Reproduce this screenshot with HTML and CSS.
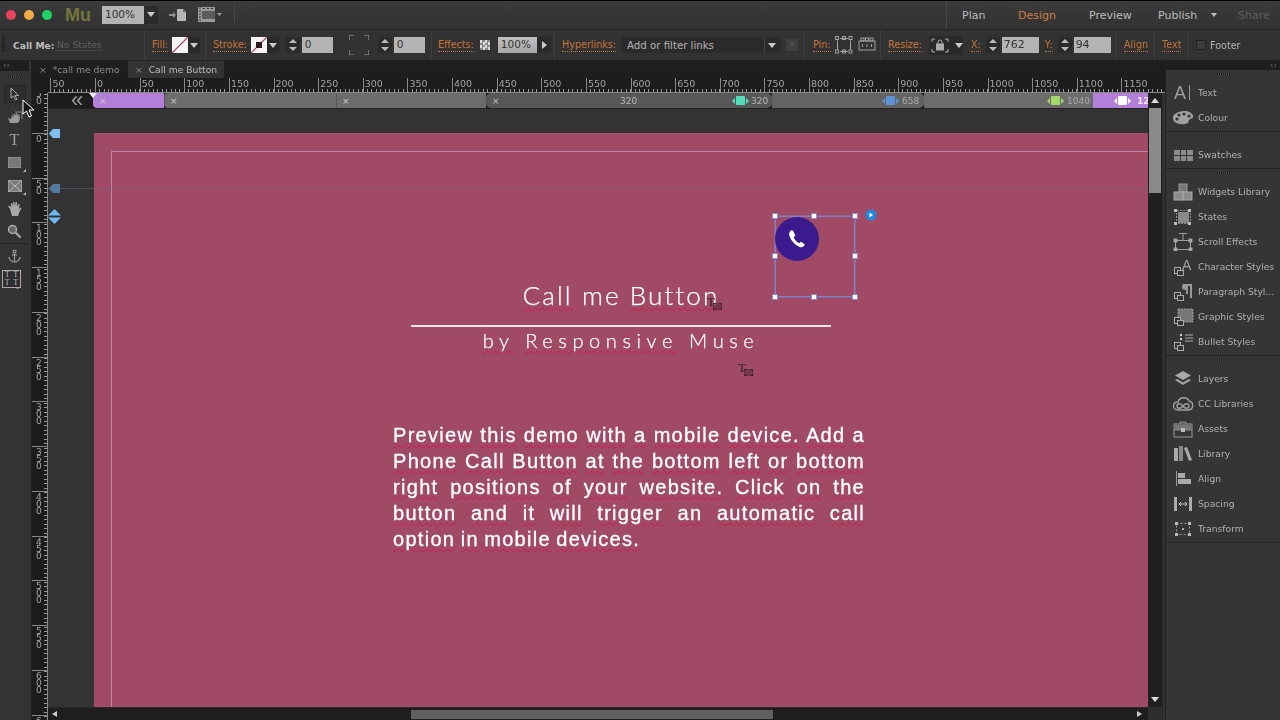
FILE: index.html
```html
<!DOCTYPE html>
<html lang="en">
<head>
    <meta charset="UTF-8">
    <title>Adobe Muse - Call me Button</title>
    <link rel="stylesheet" href="styles.css">
</head>
<body>
<div class="app">
    <!-- title bar -->
    <header class="titlebar">
        <div class="lights"><i class="red"></i><i class="yellow"></i><i class="green"></i></div>
        <div class="logo">Mu</div>
        <div class="zoom-box"><span class="field zoom-field">100%</span><span class="drop"></span></div>
        <svg class="place-icon" width="20" height="14" viewBox="0 0 20 14"><path d="M1 6h4V4l3 3-3 3V8H1z" fill="#8f8f8f"/><path d="M9 1h6l3 3v9H9z" fill="#b5b5b5"/><path d="M15 1v3h3" fill="#666"/></svg>
        <svg class="frame-icon" width="24" height="16" viewBox="0 0 24 16"><rect x="0" y="0" width="17" height="15" fill="#9a9a9a"/><rect x="4" y="4" width="13" height="8" fill="#5c5c5c"/><path d="M1 1h2M1 4h2M1 7h2M1 10h2M1 13h2M5 1.500h2M9 1.500h2M13 1.500h2" stroke="#333" stroke-width="1"/><path d="M19 6h5l-2.500 3z" fill="#999"/></svg>
        <div class="vsep top-sep"></div>
        <nav class="modes">
            <span class="m-plan">Plan</span>
            <span class="m-design">Design</span>
            <span class="m-preview">Preview</span>
            <span class="m-publish">Publish</span>
            <i class="m-arrow"></i>
            <span class="m-share">Share</span>
        </nav>
    </header>

    <!-- control strip -->
    <section class="controls">
        <div class="seg s-state"><span class="grip"></span><b class="lbl-name">Call Me:</b><span class="lbl-dim">No States</span></div>
        <div class="seg s-fill">
            <span class="lbl">Fill:</span>
            <span class="swatch"><svg width="16" height="16" viewBox="0 0 16 16"><path d="M0 16L16 0" stroke="#b0304a" stroke-width="1.200"/></svg></span><span class="mini-drop"></span>
        </div>
        <div class="seg s-stroke">
            <span class="lbl">Stroke:</span>
            <span class="swatch"><svg width="16" height="16" viewBox="0 0 16 16"><path d="M0 16L16 0" stroke="#b0304a" stroke-width="1.200"/><rect x="5" y="5" width="6" height="6" fill="#2a1a20"/></svg></span><span class="mini-drop"></span>
            <span class="spin sp-a"></span><span class="field num-s">0</span>
            <svg class="corners" width="20" height="20" viewBox="0 0 20 20"><path d="M0 5V0h5M15 0h5v5M20 15v5h-5M5 20H0v-5" fill="none" stroke="#a8a8a8" stroke-width="1"/></svg>
            <span class="spin sp-b"></span><span class="field num-s">0</span>
        </div>
        <div class="seg s-effects">
            <span class="lbl">Effects:</span>
            <span class="checker"></span>
            <span class="field opacity">100%</span><span class="play"></span>
        </div>
        <div class="seg s-links">
            <span class="lbl">Hyperlinks:</span>
            <span class="link-box"><span class="link-text">Add or filter links</span><span class="link-drop"></span></span>
            <span class="link-x">&#10005;</span>
        </div>
        <div class="seg s-pin">
            <span class="lbl">Pin:</span>
            <svg width="18" height="18" viewBox="0 0 18 18" fill="none" stroke="#a0a0a0"><path d="M2.500 4.500v9M15.500 4.500v9M5 2.500h8M5 15.500h8"/><rect x=".5" y=".5" width="3" height="3"/><rect x="7.500" y=".5" width="3" height="3"/><rect x="14" y=".5" width="3" height="3"/><rect x=".5" y="14" width="3" height="3"/><rect x="7.500" y="14" width="3" height="3"/><rect x="14" y="14" width="3" height="3"/></svg>
            <svg class="pin-b" width="18" height="18" viewBox="0 0 18 18" fill="none" stroke="#a0a0a0"><rect x="1" y="5" width="16" height="9"/><rect x="3" y="2" width="3" height="3"/><rect x="7.500" y="2" width="3" height="3"/><rect x="12" y="2" width="3" height="3"/><path d="M4.500 8v3M9 8v3M13.500 8v3"/></svg>
        </div>
        <div class="seg s-resize">
            <span class="lbl">Resize:</span>
            <span class="resize-box"><svg width="18" height="15" viewBox="0 0 18 15" fill="none" stroke="#aaa"><path d="M1 4V1h3M14 1h3v3M17 11v3h-3M4 14H1v-3"/><rect x="5.500" y="6" width="7" height="6" fill="#aaa"/><path d="M7 6V4a2 2 0 0 1 4 0v2"/></svg><i class="dn"></i></span>
            <span class="lbl lbl-x">X:</span><span class="spin"></span><span class="field num-l">762</span>
            <span class="lbl lbl-y">Y:</span><span class="spin"></span><span class="field num-l">94</span>
        </div>
        <div class="seg s-align"><span class="lbl">Align</span></div>
        <div class="seg s-text"><span class="lbl">Text</span></div>
        <div class="seg s-footer"><span class="check"></span><span>Footer</span></div>
    </section>

    <div class="workspace">
        <!-- tools -->
        <aside class="tools">
            <div class="panel-top"><span>&#8250;&#8250;</span></div>
            <div class="handle"></div>
            <div class="tool tool-active"><svg width="12" height="14" viewBox="0 0 12 14"><path d="M2 1v10l2.500-2 2 4 1.500-.8-2-3.700h3.500z" fill="none" stroke="#a8a8a8"/></svg></div>
            <div class="tool"><svg width="18" height="16" viewBox="0 0 18 16"><path d="M2 9l2 5h8l2-5-1-4-1 3V4l-1 3V3L9 7V4L7 8 6 6 5 10z" fill="#9a9a9a"/><path d="M9 3h7v7M6 6h7v7" fill="none" stroke="#888"/></svg></div>
            <div class="tool tool-t">T</div>
            <div class="tool corner"><span class="rect-tool"></span></div>
            <div class="tool corner"><svg width="14" height="12" viewBox="0 0 14 12"><rect x=".5" y=".5" width="13" height="11" fill="#7a7a7a" stroke="#999"/><path d="M.5.5l13 11M13.500.5l-13 11" stroke="#bbb"/></svg></div>
            <div class="tool"><svg width="16" height="16" viewBox="0 0 16 16"><path d="M3 8L1 5.500l1-1L4 6V2h1l1 3V1h1.200l.8 4 .5-4H10l.2 4.500L11.500 3h1.200l-.7 5 1.500-1.500 1 .7L12 12l-1 3H5z" fill="#a8a8a8"/></svg></div>
            <div class="tool"><svg width="15" height="15" viewBox="0 0 15 15"><circle cx="5.500" cy="5.500" r="4" fill="#666" stroke="#aaa" stroke-width="1.500"/><path d="M8.500 8.500l5 5" stroke="#aaa" stroke-width="2.200"/></svg></div>
            <div class="tool-sep"></div>
            <div class="tool"><svg width="13" height="14" viewBox="0 0 13 14" fill="none" stroke="#a0a0a0" stroke-width="1.200"><circle cx="6.500" cy="2.500" r="1.500"/><path d="M6.500 4v9M4 6h5M1 8c0 3 3 5 5.500 5S12 11 12 8"/></svg></div>
            <div class="tool tool-last"><span class="tt-back">T</span></div>
        </aside>

        <main class="center">
            <div class="tabs">
                <div class="tab"><span class="tab-x">&#215;</span>*call me demo</div>
                <div class="tab tab-on"><span class="tab-x">&#215;</span>Call me Button</div>
            </div>
            <div class="ruler-row">
                <div class="corner-box"></div>
                <div class="hruler">
                    <span>50</span><span>0</span><span>50</span><span>100</span><span>150</span><span>200</span><span>250</span><span>300</span><span>350</span><span>400</span><span>450</span><span>500</span><span>550</span><span>600</span><span>650</span><span>700</span><span>750</span><span>800</span><span>850</span><span>900</span><span>950</span><span>1000</span><span>1050</span><span>1100</span><span>1150</span>
                </div>
            </div>
            <div class="stage-row">
                <div class="vruler">
                    <span>5<br>0</span><span>0</span><span>5<br>0</span><span>1<br>0<br>0</span><span>1<br>5<br>0</span><span>2<br>0<br>0</span><span>2<br>5<br>0</span><span>3<br>0<br>0</span><span>3<br>5<br>0</span><span>4<br>0<br>0</span><span>4<br>5<br>0</span><span>5<br>0<br>0</span><span>5<br>5<br>0</span><span>6<br>0<br>0</span><span>6<br>5<br>0</span>
                </div>
                <div class="stage">
                    <div class="bp-bar">
                        <span class="bp-arrows">&#171;</span>
                        <div class="bp bp-p1"><span class="bp-x">&#215;</span></div>
                        <div class="bp bp-g1"><span class="bp-x">&#215;</span></div>
                        <div class="bp bp-g2"><span class="bp-x">&#215;</span></div>
                        <div class="bp bp-main"><span class="bp-x">&#215;</span><span class="bp-mid">320</span><i class="mark mk-teal"></i><span class="bp-num">320</span></div>
                        <div class="bp bp-g3"><i class="mark mk-blue"></i><span class="bp-num">658</span></div>
                        <div class="bp bp-g4"><i class="mark mk-green"></i><span class="bp-num">1040</span></div>
                        <div class="bp bp-p2"><i class="mark mk-white"></i><span class="bp-num">12</span></div>
                        <i class="bp-tri"></i>
                    </div>
                    <div class="canvas">
                        <div class="guide-line"></div>
                        <i class="guide-pin gp-top"></i>
                        <i class="guide-pin gp-mid"></i>
                        <svg class="gp-diamond" width="13" height="15" viewBox="0 0 13 15"><path d="M6.500 0L13 6.500H0zM0 8.500h13L6.500 15z" fill="#6fb7f2"/></svg>
                        <div class="page">
                            <div class="margins"></div>
                            <div class="hero">
                                <h1><span class="sp">Call</span> me <span class="sp">Button</span></h1>
                                <hr>
                                <h2><span class="sp">by</span> <span class="sp">Responsive</span> Muse</h2>
                            </div>
                            <p class="intro"><span class="sp">Preview</span> <span class="sp">this</span> <span class="sp">demo</span> <span class="sp">with</span> <span class="sp">a</span> <span class="sp">mobile</span> <span class="sp">device.</span> <span class="sp">Add</span> <span class="sp">a</span> <span class="sp">Phone</span> <span class="sp">Call</span> <span class="sp">Button</span> <span class="sp">at</span> <span class="sp">the</span> <span class="sp">bottom</span> <span class="sp">left</span> <span class="sp">or</span> <span class="sp">bottom</span> <span class="sp">right</span> <span class="sp">positions</span> <span class="sp">of</span> <span class="sp">your</span> <span class="sp">website.</span> <span class="sp">Click</span> <span class="sp">on</span> <span class="sp">the</span> <span class="sp">button</span> <span class="sp">and</span> <span class="sp">it</span> <span class="sp">will</span> <span class="sp">trigger</span> <span class="sp">an</span> <span class="sp">automatic</span> <span class="sp">call</span> <span class="sp">option</span> <span class="sp">in</span> <span class="sp">mobile</span> <span class="sp">devices.</span></p>

                            <div class="selection">
                                <div class="call-btn"><svg width="20" height="20" viewBox="0 0 20 20"><path d="M4 1.500c-1.500 1-2.300 2.500-1.700 4.800 1.300 5 5.800 10 10.200 11.600 2 .7 3.800.2 4.900-1.400.4-.6.300-1-.2-1.400l-2.700-2c-.5-.3-.9-.3-1.300.1l-1 1.100c-2.300-1-4.700-3.700-5.600-6.200l1.200-.9c.5-.4.600-.8.300-1.300L6 1.800c-.4-.7-1.200-.8-2-.3z" fill="#fff"/></svg></div>
                                <i class="h h-tl"></i><i class="h h-tc"></i><i class="h h-tr"></i>
                                <i class="h h-ml"></i><i class="h h-mr"></i>
                                <i class="h h-bl"></i><i class="h h-bc"></i><i class="h h-br"></i>
                                <svg class="sel-badge" width="12" height="12" viewBox="0 0 12 12"><circle cx="6" cy="6" r="5.500" fill="#1f88e0"/><path d="M4.500 3.500l3.500 2.500-3.500 2.500z" fill="#fff"/></svg>
                            </div>
                            <div class="text-tag tag-a"><span>T</span><i></i></div>
                            <div class="text-tag tag-b"><span>T</span><i></i></div>
                        </div>
                    </div>
                    <div class="hscroll"><i class="arr-l"></i><div class="hthumb"></div><i class="arr-r"></i></div>
                </div>
                <div class="vscroll"><i class="arr-u"></i><div class="vthumb"></div><i class="arr-d"></i><div class="vcorner"></div></div>
            </div>
        </main>

        <!-- panels -->
        <aside class="panels">
            <div class="panel-top right"><span>&#8249;&#8249;</span></div>
            <div class="group">
                <div class="handle"></div>
                <div class="row"><svg width="22" height="18" viewBox="0 0 22 18"><text x="2" y="15" class="ico-a">A</text><path d="M17.500 1v15" stroke="#999"/></svg><span>Text</span></div>
                <div class="row"><svg width="22" height="18" viewBox="0 0 22 18"><path d="M7 3c5-2 13-1 14 4 .6 3-3 2.500-4 4-1 2 .5 3-4 4C6 16 0 13 1 8c.4-2.500 3-4 6-5z" fill="#a0a0a0"/><circle cx="7" cy="6" r="1.600" fill="#333"/><circle cx="12" cy="5" r="1.600" fill="#333"/><circle cx="17" cy="7" r="1.600" fill="#333"/><circle cx="5" cy="10" r="1.600" fill="#333"/></svg><span>Colour</span></div>
            </div>
            <div class="group">
                <div class="handle"></div>
                <div class="row"><svg width="22" height="18" viewBox="0 0 22 18"><rect x="2" y="4" width="19" height="11" fill="#8a8a8a"/><path d="M8.500 4v11M14.500 4v11M2 9.500h19" stroke="#333"/></svg><span>Swatches</span></div>
            </div>
            <div class="group">
                <div class="handle"></div>
                <div class="row"><svg width="22" height="18" viewBox="0 0 22 18"><rect x="7" y="1" width="8" height="8" fill="#777" stroke="#999"/><rect x="2" y="9" width="9" height="8" fill="#8a8a8a" stroke="#aaa"/><rect x="11" y="9" width="9" height="8" fill="#8a8a8a" stroke="#aaa"/></svg><span>Widgets Library</span></div>
                <div class="row"><svg width="22" height="18" viewBox="0 0 22 18"><rect x="6" y="4" width="11" height="11" fill="#8a8a8a"/><path d="M4.500 2v13M2 2.500h16M18.500 2v14M3 15.500h15" stroke="#888" stroke-dasharray="2 1"/><rect x="2" y="1" width="3" height="3" fill="#bbb"/><rect x="16" y="1" width="3" height="3" fill="#bbb"/><rect x="2" y="14" width="3" height="3" fill="#bbb"/><rect x="16" y="14" width="3" height="3" fill="#bbb"/></svg><span>States</span></div>
                <div class="row"><svg width="22" height="18" viewBox="0 0 22 18" fill="none" stroke="#a0a0a0"><path d="M7 .5h8M11 .5v7M3.500 7.500h15v9h-15z"/><rect x="2" y="6" width="3" height="3" fill="#aaa"/><rect x="17" y="6" width="3" height="3" fill="#aaa"/><rect x="2" y="15" width="3" height="3" fill="#aaa"/><rect x="17" y="15" width="3" height="3" fill="#aaa"/></svg><span>Scroll Effects</span></div>
                <div class="row"><svg width="22" height="18" viewBox="0 0 22 18"><text x="10" y="12" class="ico-a small">A</text><rect x="2.500" y="9.500" width="6" height="6" fill="none" stroke="#aaa"/><rect x="5.500" y="12.500" width="6" height="5" fill="#333" stroke="#aaa"/></svg><span>Character Styles</span></div>
                <div class="row"><svg width="22" height="18" viewBox="0 0 22 18"><path d="M11 1h9v14h-2V3h-2v8h-2V7c-3 0-4-1-4-3s1-3 1-3z" fill="#999"/><rect x="2.500" y="9.500" width="6" height="6" fill="none" stroke="#aaa"/><rect x="5.500" y="12.500" width="6" height="5" fill="#333" stroke="#aaa"/></svg><span>Paragraph Styl...</span></div>
                <div class="row"><svg width="22" height="18" viewBox="0 0 22 18"><rect x="6" y="1" width="15" height="13" fill="#777" stroke="#999" stroke-dasharray="2 1"/><rect x="2.500" y="9.500" width="6" height="6" fill="#333" stroke="#aaa"/><rect x="5.500" y="12.500" width="6" height="5" fill="#333" stroke="#aaa"/></svg><span>Graphic Styles</span></div>
                <div class="row"><svg width="22" height="18" viewBox="0 0 22 18"><path d="M13 2h8M13 5h8M13 8h8" stroke="#aaa"/><circle cx="9" cy="2" r="1.200" fill="#ccc"/><circle cx="9" cy="6" r="1.200" fill="#ccc"/><rect x="2.500" y="9.500" width="6" height="6" fill="none" stroke="#aaa"/><rect x="5.500" y="12.500" width="6" height="5" fill="#333" stroke="#aaa"/></svg><span>Bullet Styles</span></div>
            </div>
            <div class="group">
                <div class="handle"></div>
                <div class="row"><svg width="22" height="18" viewBox="0 0 22 18"><path d="M11 1l8 4.500-8 4.500-8-4.500zM3 10l2-1 6 3.500L17 9l2 1-8 5z" fill="#a8a8a8"/></svg><span>Layers</span></div>
                <div class="row"><svg width="22" height="18" viewBox="0 0 22 18" fill="none" stroke="#a0a0a0" stroke-width="1.400"><path d="M6 15c-6 0-6-8 0-8 1-5 9-6 11-1 5 1 5 9-1 9z"/><path d="M5 11c0-3 4-3 6 0s6 3 6 0-4-3-6 0-6 3-6 0z"/></svg><span>CC Libraries</span></div>
                <div class="row"><svg width="22" height="18" viewBox="0 0 22 18"><rect x="2" y="4" width="18" height="13" fill="none" stroke="#999"/><path d="M2 10h18" stroke="#999"/><path d="M8 4V2h6v2" fill="none" stroke="#999"/><rect x="3" y="5" width="16" height="5" fill="#777"/><rect x="9" y="8" width="4" height="4" fill="#bbb"/></svg><span>Assets</span></div>
                <div class="row"><svg width="22" height="18" viewBox="0 0 22 18"><rect x="2" y="3" width="4" height="13" fill="#aaa"/><rect x="7" y="1" width="4" height="15" fill="#888"/><path d="M12 3l3-1 5 13-3 1z" fill="#aaa"/></svg><span>Library</span></div>
                <div class="row"><svg width="22" height="18" viewBox="0 0 22 18"><path d="M4.500 1v15" stroke="#999"/><rect x="6" y="3" width="7" height="5" fill="#aaa"/><rect x="6" y="9" width="13" height="5" fill="#aaa"/></svg><span>Align</span></div>
                <div class="row"><svg width="22" height="18" viewBox="0 0 22 18"><rect x="2" y="2" width="3" height="14" fill="#aaa"/><rect x="17" y="2" width="3" height="14" fill="#aaa"/><path d="M7 9h8M7 9l2-2M7 9l2 2M15 9l-2-2M15 9l-2 2" stroke="#ccc" fill="none"/></svg><span>Spacing</span></div>
                <div class="row"><svg width="22" height="18" viewBox="0 0 22 18"><rect x="4.500" y="3.500" width="13" height="11" fill="none" stroke="#999" stroke-dasharray="2 2"/><rect x="3" y="2" width="3" height="3" fill="#bbb"/><rect x="16" y="2" width="3" height="3" fill="#bbb"/><rect x="3" y="13" width="3" height="3" fill="#bbb"/><rect x="16" y="13" width="3" height="3" fill="#bbb"/><rect x="10" y="8" width="2" height="2" fill="#aaa"/></svg><span>Transform</span></div>
            </div>
        </aside>
    </div>

    <!-- dragged text frame glyph + mouse pointer sit over the tool column -->
    <div class="drag-tt"><span>T</span><span>T</span><span>T</span><span>T</span></div>
    <svg class="pointer" width="13" height="19" viewBox="0 0 13 19"><path d="M1 1v14l3.500-3 2.500 6 2.500-1-2.500-6H12z" fill="#111" stroke="#fff" stroke-width="1"/></svg>
</div>
</body>
</html>
```
FILE: styles.css
```css
* {
    box-sizing: border-box;
}
html, body {
    margin: 0;
    height: 100%;
    background: #333;
}
body {
    width: 1280px;
    height: 720px;
    overflow: hidden;
    font-family: "DejaVu Sans", sans-serif;
    font-size: 9.6px;
    color: #b4b4b4;
}
i {
    display: block;
}
.app {
    position: relative;
    width: 1280px;
    height: 720px;
    display: flex;
    flex-direction: column;
    filter: blur(0.35px);
}

/* title bar */
.titlebar {
    height: 30px;
    flex: none;
    display: flex;
    align-items: center;
    border-top: 1px solid #000;
    border-bottom: 1px solid #242424;
    background: linear-gradient(#3b3b3b, #323232);
}
.titlebar > * {
    flex: none;
}
.lights {
    display: flex;
    gap: 8px;
    margin-left: 6px;
}
.lights i {
    width: 10px;
    height: 10px;
    border-radius: 50%;
}
.red { background: #e8425c; }
.yellow { background: #f4ab45; }
.green { background: #20d365; }
.logo {
    margin-left: 13px;
    width: 37px;
    font-family: "Liberation Sans", sans-serif;
    font-size: 18px;
    font-weight: bold;
    color: #75773f;
}
.zoom-box {
    display: flex;
    height: 18px;
}
.field {
    display: block;
    background: #b4b4b4;
    color: #333;
    font-size: 10.5px;
    line-height: 17px;
    padding-left: 3px;
}
.zoom-field {
    width: 42px;
}
.drop {
    width: 14px;
    background: #2c2c2c;
    position: relative;
}
.drop::after, .mini-drop::after, .link-drop::after, .dn, .m-arrow {
    content: "";
    border-left: 4px solid transparent;
    border-right: 4px solid transparent;
    border-top: 5px solid #ccc;
    width: 0;
    height: 0;
}
.drop::after, .mini-drop::after, .link-drop::after {
    position: absolute;
    left: 3px;
    top: 6px;
}
.place-icon {
    margin-left: 10px;
}
.frame-icon {
    margin-left: 10px;
}
.vsep {
    width: 1px;
    background: #484848;
}
.top-sep {
    height: 20px;
    margin-left: 12px;
}
.modes {
    margin-left: 711px;
    display: flex;
    align-items: center;
    font-size: 11px;
    color: #bbb;
    border-left: 1px solid #484848;
    height: 28px;
}
.modes > * {
    flex: none;
}
.m-plan { margin-left: 15px; width: 56px; }
.m-design { width: 71px; color: #cf7d3f; }
.m-preview { width: 69px; }
.m-publish { width: 53px; }
.m-arrow { border-top-color: #bbb; margin-right: 21px; border-left-width: 3px; border-right-width: 3px; border-top-width: 4px; }
.m-share { color: #5c5c5c; }

/* control strip */
.controls {
    height: 31px;
    flex: none;
    display: flex;
    align-items: center;
    background: #323232;
    border-bottom: 1px solid #222;
}
.seg {
    height: 100%;
    display: flex;
    align-items: center;
    border-right: 1px solid #3e3e3e;
    flex: none;
    white-space: nowrap;
}
.s-state { width: 145px; }
.s-fill { width: 61px; padding-left: 7px; }
.s-stroke { width: 226px; padding-left: 7px; }
.s-effects { width: 123px; padding-left: 6px; }
.s-links { width: 250px; padding-left: 7px; }
.s-pin { width: 76px; padding-left: 8px; }
.s-resize { width: 235px; padding-left: 7px; }
.s-align { width: 39px; padding-left: 8px; }
.s-text { width: 34px; padding-left: 7px; }
.s-footer { padding-left: 7px; border: none; }
.grip {
    width: 3px;
    height: 16px;
    margin-left: 2px;
    margin-right: 8px;
    background: repeating-linear-gradient(#1a1a1a 0 1px, transparent 1px 2px);
    flex: none;
}
.lbl-name {
    color: #bdbdbd;
    font-size: 9.2px;
    width: 44px;
    flex: none;
}
.lbl-dim {
    color: #5e5e5e;
    border-bottom: 1px dotted #5e5e5e;
    font-size: 9.2px;
}
.lbl {
    color: #c6733a;
    border-bottom: 1px dotted #c6733a;
    line-height: 12px;
    font-size: 9.6px;
    flex: none;
}
.swatch {
    width: 16px;
    height: 16px;
    background: #f4f4f4;
    margin-left: 4px;
    flex: none;
}
.swatch svg {
    display: block;
}
.mini-drop {
    width: 12px;
    height: 16px;
    background: #2a2a2a;
    position: relative;
    flex: none;
}
.mini-drop::after {
    left: 2px;
    top: 6px;
}
.spin {
    width: 14px;
    height: 16px;
    flex: none;
    background: #2a2a2a;
    position: relative;
    margin-right: 2px;
}
.spin::before, .spin::after {
    content: "";
    position: absolute;
    left: 3px;
    border-left: 4px solid transparent;
    border-right: 4px solid transparent;
}
.spin::before {
    top: 2px;
    border-bottom: 4px solid #bbb;
}
.spin::after {
    bottom: 2px;
    border-top: 4px solid #bbb;
}
.sp-a { margin-left: 7px; }
.sp-b { margin-left: 9px; }
.num-s { width: 31px; height: 16px; line-height: 15px; color: #333; flex: none; }
.corners { margin: 0 0 0 16px; flex: none; }
.checker {
    width: 10px;
    height: 10px;
    margin-left: 6px;
    background: conic-gradient(#888 25%, #ddd 0 50%, #888 0 75%, #ddd 0) 0 0 / 5px 5px;
    flex: none;
}
.opacity {
    width: 39px;
    height: 16px;
    line-height: 15px;
    margin-left: 8px;
    background: linear-gradient(#c0c0c0, #a8a8a8);
    flex: none;
}
.play {
    width: 14px;
    height: 16px;
    background: #2a2a2a;
    position: relative;
    flex: none;
}
.play::after {
    content: "";
    position: absolute;
    left: 5px;
    top: 4px;
    border-top: 4px solid transparent;
    border-bottom: 4px solid transparent;
    border-left: 5px solid #ccc;
}
.link-box {
    width: 160px;
    height: 16px;
    margin-left: 5px;
    background: #2b2b2b;
    display: flex;
    align-items: center;
    justify-content: space-between;
    color: #b4b4b4;
    flex: none;
}
.link-text {
    padding-left: 6px;
    font-size: 10.2px;
}
.link-drop {
    width: 17px;
    height: 16px;
    position: relative;
    border-left: 1px solid #444;
}
.link-x {
    width: 12px;
    height: 12px;
    margin-left: 5px;
    background: #3e3e3e;
    color: #555;
    font-size: 8px;
    line-height: 12px;
    text-align: center;
    flex: none;
}
.s-pin svg {
    margin-left: 4px;
    flex: none;
}
.s-pin .pin-b {
    margin-left: 5px;
}
.resize-box {
    width: 34px;
    height: 19px;
    margin-left: 7px;
    display: flex;
    align-items: center;
    gap: 6px;
    padding-left: 2px;
    background: #2a2a2a;
    flex: none;
}
.dn {
    border-top-color: #ccc;
    flex: none;
}
.lbl-x { margin-left: 8px; }
.lbl-y { margin-left: 6px; }
.s-resize .spin { margin-left: 5px; margin-right: 2px; }
.num-l { width: 37px; height: 16px; line-height: 15px; padding-left: 2px; font-size: 11px; flex: none; }
.check {
    width: 10px;
    height: 10px;
    border: 1px solid #222;
    background: #3c3c3c;
    margin-right: 4px;
    flex: none;
}

/* workspace */
.workspace {
    height: 659px;
    flex: none;
    display: flex;
    overflow: hidden;
}
.tools {
    width: 32px;
    flex: none;
    background: #333;
    border-right: 1px solid #222;
    padding-right: 2px;
    display: flex;
    flex-direction: column;
    align-items: center;
}
.panel-top {
    width: 100%;
    height: 10px;
    flex: none;
    background: #1e1e1e;
    color: #666;
    font-size: 9px;
    line-height: 9px;
    padding-left: 3px;
}
.panel-top.right {
    height: 9px;
    text-align: right;
    padding-right: 3px;
}
.handle {
    width: 13px;
    height: 2px;
    margin: 3px auto 5px;
    background: repeating-linear-gradient(90deg, #1c1c1c 0 1px, #4a4a4a 1px 2px);
    flex: none;
}
.tools .handle {
    margin: 5px auto 6px;
}
.tool {
    width: 22px;
    height: 23px;
    flex: none;
    display: flex;
    align-items: center;
    justify-content: center;
    position: relative;
}
.tool-active {
    height: 18px;
    margin: 1px 0 2px;
    border: 1px solid #262626;
    background: #2e2e2e;
}
.tool-t {
    font-family: "Liberation Serif", serif;
    font-size: 16px;
    color: #a0a0a0;
}
.corner::after {
    content: "";
    position: absolute;
    right: 0;
    bottom: 2px;
    border-left: 3px solid transparent;
    border-bottom: 3px solid #bbb;
}
.rect-tool {
    width: 13px;
    height: 11px;
    background: #787878;
    border: 1px solid #8c8c8c;
}
.tool-sep {
    width: 100%;
    height: 1px;
    background: #242424;
}
.tt-back {
    font-family: "Liberation Serif", serif;
    font-size: 11px;
    color: #999;
    margin: 12px 0 0 6px;
}
.center {
    width: 1133px;
    flex: none;
    display: flex;
    flex-direction: column;
}
.tabs {
    height: 17px;
    flex: none;
    display: flex;
    background: #1e1e1e;
}
.tab {
    width: 96px;
    padding-left: 7px;
    line-height: 17px;
    color: #8c8c8c;
    font-size: 9.2px;
    white-space: nowrap;
}
.tab-x {
    margin-right: 6px;
    color: #888;
}
.tab-on {
    background: #333;
    color: #bdbdbd;
}
.ruler-row {
    height: 15px;
    flex: none;
    display: flex;
}
.corner-box {
    width: 16px;
    background: #1c1c1c;
}
.hruler {
    flex: 1;
    display: flex;
    overflow: hidden;
    padding-left: 2.4px;
    background:
        repeating-linear-gradient(90deg, #999 0 1px, transparent 1px 4.463px) 2.4px 100% / 100% 3px no-repeat,
        #1c1c1c;
    border-bottom: 1px solid #888;
}
.hruler span {
    width: 44.63px;
    flex: none;
    border-left: 1px solid #888;
    padding-left: 1px;
    font-size: 9.5px;
    line-height: 11px;
    color: #a4a4a4;
}
.stage-row {
    height: 627px;
    display: flex;
}
.vruler {
    width: 16px;
    flex: none;
    overflow: hidden;
    background:
        repeating-linear-gradient(#999 0 1px, transparent 1px 4.475px) 100% 0.5px / 3px 100% no-repeat,
        #1c1c1c;
    border-right: 1px solid #888;
}
.vruler span {
    display: block;
    height: 44.75px;
    border-top: 1px solid #888;
    font-size: 9px;
    line-height: 7px;
    padding: 2px 0 0 4px;
    color: #a4a4a4;
}
.vruler span:first-child {
    margin-top: -5px;
}
.stage {
    width: 1100px;
    flex: none;
    display: flex;
    flex-direction: column;
}
.bp-bar {
    height: 16px;
    flex: none;
    display: flex;
    position: relative;
    padding-left: 45px;
    background: #1c1c1c;
    border-bottom: 1px solid #222;
}
.bp-arrows {
    position: absolute;
    left: 23px;
    top: -6px;
    font-size: 22px;
    font-family: "Liberation Sans", sans-serif;
    color: #9a9a9a;
}
.bp {
    height: 15px;
    position: relative;
    flex: none;
    display: flex;
    align-items: center;
    font-size: 9px;
    color: #b8b8b8;
}
.bp-x {
    position: absolute;
    left: 6px;
    font-size: 9px;
    color: #ccc;
}
.bp-p1 { width: 71px; background: #b47fd8; border-radius: 4px 0 0 4px; }
.bp-g1 { width: 172px; background: #6c6c6c; border-radius: 4px 0 0 4px; box-shadow: inset 1px 0 0 #5a5a5a; }
.bp-g2 { width: 150px; background: #6c6c6c; box-shadow: inset 1px 0 0 #5a5a5a; }
.bp-main { width: 286px; background: #575757; border-radius: 5px; }
.bp-g3 { width: 152px; background: #636363; border-radius: 0 5px 5px 0; }
.bp-g4 { width: 169px; background: #6c6c6c; }
.bp-p2 { flex: 1; background: #b47fd8; }
.bp-mid { position: absolute; left: 134px; }
.bp-num { position: absolute; }
.bp-main .bp-num { left: 265px; }
.bp-g3 .bp-num { left: 130px; color: #aaa; }
.bp-g4 .bp-num { left: 143px; color: #aaa; }
.bp-p2 .bp-num { left: 44px; color: #f0e6f8; font-weight: bold; }
.mark {
    position: absolute;
    top: 3px;
    width: 9px;
    height: 9px;
    border-radius: 1px;
}
.mark::before, .mark::after {
    content: "";
    position: absolute;
    top: 1.500px;
    border-top: 3px solid transparent;
    border-bottom: 3px solid transparent;
}
.mark::before { left: -4px; border-right: 3px solid currentColor; }
.mark::after { right: -4px; border-left: 3px solid currentColor; }
.mk-teal { left: 250px; background: #55dcb8; color: #55dcb8; }
.mk-blue { left: 114px; background: #5f93d8; color: #5f93d8; }
.mk-green { left: 127px; background: #a4d86c; color: #a4d86c; }
.mk-white { left: 25px; background: #fff; color: #fff; }
.bp-tri {
    position: absolute;
    left: 41px;
    top: 0;
    border-left: 4px solid transparent;
    border-right: 4px solid transparent;
    border-top: 5px solid #eee;
}

/* canvas */
.canvas {
    flex: 1;
    position: relative;
    overflow: hidden;
    background: #333;
    padding: 24px 0 0 46px;
}
.guide-line {
    position: absolute;
    left: 0;
    right: 0;
    top: 79px;
    height: 1px;
    background: #6f6a98;
    opacity: 0.5;
    z-index: 2;
}
.guide-pin {
    position: absolute;
    left: 1px;
    width: 11px;
    height: 9px;
    clip-path: polygon(0 0, 65% 0, 100% 50%, 65% 100%, 0 100%);
    z-index: 2;
    transform: scaleX(-1);
}
.gp-top { top: 20px; background: #7cc0f5; }
.gp-mid { top: 75px; background: #517a9e; }
.gp-diamond {
    position: absolute;
    left: 0;
    top: 100px;
}
.page {
    position: relative;
    width: 1054px;
    height: 574px;
    background: #a04a66;
    color: #fff;
}
.margins {
    position: absolute;
    left: 17px;
    top: 18px;
    right: 0;
    bottom: 0;
    border-left: 1px solid #bb88b0;
    border-top: 1px solid #bb88b0;
}
.sp {
    text-decoration: underline wavy #d0184c 1px;
    text-underline-offset: 2px;
}
.hero {
    position: absolute;
    left: 317px;
    top: 145px;
    width: 420px;
    text-align: center;
}
.hero h1 {
    margin: 0;
    font-family: Lato, sans-serif;
    font-weight: 300;
    font-size: 26px;
    letter-spacing: 2.1px;
    line-height: 34px;
    -webkit-text-stroke: 0.25px #fff;
}
.hero hr {
    margin: 13px 0 0;
    border: none;
    height: 2px;
    background: #f5e6ea;
}
.hero h2 {
    margin: 0;
    font-family: Lato, sans-serif;
    font-weight: 300;
    font-size: 20px;
    letter-spacing: 5.6px;
    line-height: 26px;
    -webkit-text-stroke: 0.25px #fff;
}
.intro {
    position: absolute;
    left: 299px;
    top: 289px;
    width: 472px;
    margin: 0;
    font-family: "Liberation Sans", sans-serif;
    font-size: 20px;
    line-height: 26px;
    letter-spacing: 1.3px;
    word-spacing: -1.5px;
    text-align: justify;
    -webkit-text-stroke: 0.3px #fff;
}
.selection {
    position: absolute;
    left: 681px;
    top: 83px;
    width: 80px;
    height: 81px;
    border: 1px solid #7d80c4;
    box-shadow: 0 0 0 0.5px #7d80c4;
}
.call-btn {
    position: absolute;
    left: -1px;
    top: 0;
    width: 44px;
    height: 44px;
    border-radius: 50%;
    background: #3a1a8c;
    display: flex;
    align-items: center;
    justify-content: center;
}
.h {
    position: absolute;
    width: 6px;
    height: 6px;
    background: #fff;
    border: 1px solid #8a8cc8;
}
.h-tl { left: -4px; top: -4px; }
.h-tc { left: 35px; top: -4px; }
.h-tr { right: -4px; top: -4px; }
.h-ml { left: -4px; top: 36px; }
.h-mr { right: -4px; top: 36px; }
.h-bl { left: -4px; bottom: -4px; }
.h-bc { left: 35px; bottom: -4px; }
.h-br { right: -4px; bottom: -4px; }
.sel-badge {
    position: absolute;
    left: 89px;
    top: -8px;
}
.text-tag {
    position: absolute;
    width: 18px;
    height: 16px;
    color: #2a1a20;
    font-family: "Liberation Serif", serif;
    font-size: 13px;
    line-height: 12px;
}
.text-tag i {
    position: absolute;
    left: 6px;
    top: 7px;
    width: 9px;
    height: 7px;
    border: 1px dashed #3a2a30;
    background: rgba(90, 40, 60, 0.6);
}
.tag-a { left: 613px; top: 163px; }
.tag-b { left: 644px; top: 229px; }
.hscroll {
    height: 13px;
    flex: none;
    background: #1e1e1e;
    border-top: 1px solid #2a2a2a;
    position: relative;
}
.hthumb {
    position: absolute;
    left: 363px;
    top: 2px;
    width: 362px;
    height: 9px;
    background: #5f5f5f;
}
.arr-l, .arr-r {
    position: absolute;
    top: 3px;
    border-top: 3px solid transparent;
    border-bottom: 3px solid transparent;
}
.arr-l { left: 4px; border-right: 5px solid #ccc; }
.arr-r { right: 6px; border-left: 5px solid #ccc; }
.vscroll {
    width: 15px;
    flex: none;
    background: #202020;
    position: relative;
    border-right: 1px solid #2a2a2a;
}
.vthumb {
    position: absolute;
    left: 1px;
    top: 15px;
    width: 12px;
    height: 85px;
    background: #8a8a8a;
}
.arr-u, .arr-d {
    position: absolute;
    left: 3px;
    border-left: 4px solid transparent;
    border-right: 4px solid transparent;
}
.arr-u { top: 5px; border-bottom: 5px solid #ddd; }
.arr-d { top: 604px; border-top: 5px solid #ddd; }
.vcorner {
    position: absolute;
    left: 0;
    right: 0;
    bottom: 0;
    height: 13px;
    background: #2e2e2e;
}
.panels {
    flex: 1;
    background: #353535;
    border-left: 1px solid #222;
}
.group {
    padding-bottom: 1px;
    border-bottom: 1px solid #232323;
}
.row {
    height: 25px;
    display: flex;
    align-items: center;
    padding-left: 6px;
    gap: 4px;
    font-size: 9.2px;
    color: #b0b0b0;
    white-space: nowrap;
}
.row svg {
    flex: none;
}
.ico-a {
    font-family: "Liberation Sans", sans-serif;
    font-size: 18px;
    fill: #a0a0a0;
}
.ico-a.small {
    font-size: 14px;
}

/* items that float above the tool column */
.drag-tt {
    position: absolute;
    left: 2px;
    top: 270px;
    width: 19px;
    height: 18px;
    display: grid;
    grid-template-columns: 1fr 1fr;
    border: 1px solid #aaa;
    background: #2e2e2e;
    color: #bbb;
    font-family: "Liberation Serif", serif;
    font-size: 8px;
    line-height: 8px;
    text-align: center;
}
.pointer {
    position: absolute;
    left: 22px;
    top: 99px;
}
```
